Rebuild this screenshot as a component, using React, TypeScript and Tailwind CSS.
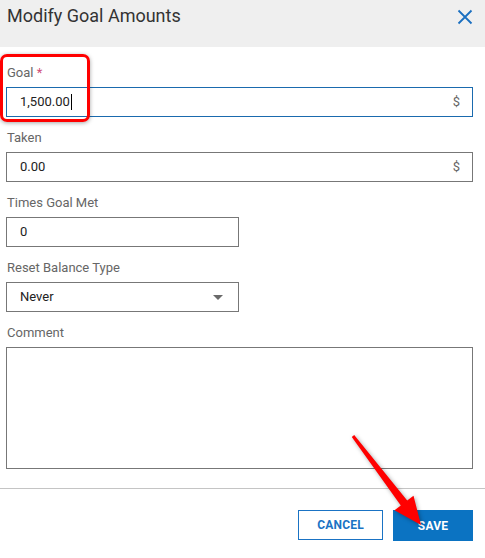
import React from "react";

function Field({ label, required, children }: { label: string; required?: boolean; children: React.ReactNode }) {
  return (
    <div className="mb-[13px]">
      <div className="text-[13px] leading-[16px] text-[#666] ml-px mb-[6px]">
        {label}
        {required && <span className="text-[#d0507a]"> *</span>}
      </div>
      {children}
    </div>
  );
}

export default function App() {
  return (
    <div className="relative w-[485px] h-[558px] overflow-hidden bg-white" style={{ fontFamily: "Roboto, 'Liberation Sans', sans-serif" }}>
      <div className="h-[47px] bg-[#efefef] flex items-start justify-between pl-[7px] pr-[12px] pt-[4px]">
        <h1 className="text-[18px] leading-[24px] text-[#333]">Modify Goal Amounts</h1>
        <svg width="16" height="16" viewBox="0 0 16 16" className="mt-[5px]">
          <path d="M1.5 1.5 L14.5 14.5 M14.5 1.5 L1.5 14.5" stroke="#1a6fc0" strokeWidth="1.8" fill="none" />
        </svg>
      </div>

      <div className="pl-[6px] pr-[12px] pt-[18px]">
        <Field label="Goal" required>
          <div className="h-[30px] border border-[#1a6aae] flex items-center justify-between pl-[13px] pr-[12px] text-[13px] text-[#222]">
            <span className="flex items-center">
              1,500.00<span className="inline-block w-px h-[16px] bg-black ml-px" />
            </span>
            <span className="text-[#666]">$</span>
          </div>
        </Field>
        <Field label="Taken">
          <div className="h-[30px] border border-[#777] flex items-center justify-between pl-[13px] pr-[12px] text-[13px] text-[#222]">
            <span>0.00</span>
            <span className="text-[#666]">$</span>
          </div>
        </Field>
        <Field label="Times Goal Met">
          <div className="w-[233px] h-[30px] border border-[#777] flex items-center pl-[13px] text-[13px] text-[#222]">0</div>
        </Field>
        <Field label="Reset Balance Type">
          <div className="w-[233px] h-[30px] border border-[#777] flex items-center justify-between pl-[13px] pr-[15px] text-[13px] text-[#222]">
            <span>Never</span>
            <span className="w-0 h-0 border-l-[5px] border-r-[5px] border-t-[5px] border-l-transparent border-r-transparent border-t-[#6a6a6a]" />
          </div>
        </Field>
        <Field label="Comment">
          <div className="h-[122px] border border-[#777]" />
        </Field>
      </div>

      <div className="mt-[19px] border-t border-[#c4c4c4]" />

      <div className="flex justify-end gap-[10px] pr-[12px] pt-[21px]">
        <button className="w-[85px] h-[30px] border border-[#1a73c4] text-[#1a73c4] text-[12px] font-bold tracking-[0.2px]">CANCEL</button>
        <button className="w-[80px] h-[31px] bg-[#0b73c2] text-white text-[12px] font-bold tracking-[0.2px]">SAVE</button>
      </div>

      <div className="absolute left-0 top-[54px] w-[90px] h-[68px] border-[3px] border-[#ff0000] rounded-[7px] shadow-[0_1px_4px_rgba(0,0,0,0.35)]" />

      <svg className="absolute left-0 top-0 pointer-events-none" width="485" height="558" viewBox="0 0 485 558" style={{ filter: "drop-shadow(1px 1px 2px rgba(0,0,0,0.35))" }}>
        <polygon points="351.8,436.9 354.2,435.1 407.2,500.6 413.5,495.7 421,525 394.5,510.3 400.8,505.4" fill="#ff0000" />
      </svg>
    </div>
  );
}
